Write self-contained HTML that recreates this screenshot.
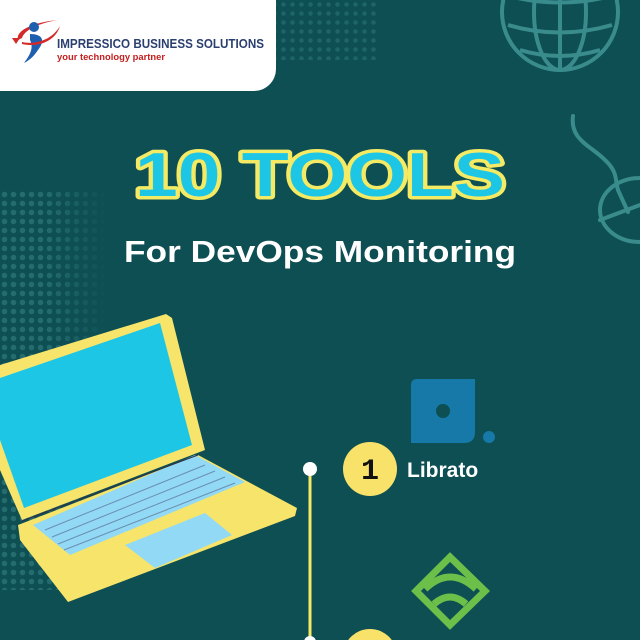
<!DOCTYPE html>
<html><head><meta charset="utf-8"><style>
html,body{margin:0;padding:0;width:640px;height:640px;overflow:hidden}
body{background:#0d4f52;position:relative;font-family:"Liberation Sans",sans-serif}
.dots{position:absolute;left:0;top:190px;width:110px;height:400px;background-image:radial-gradient(circle,#2b7477 2.5px,transparent 3px);background-size:9px 9px;opacity:.8;-webkit-mask-image:linear-gradient(to right,#000 40%,transparent);mask-image:linear-gradient(to right,#000 40%,transparent)}
.dots2{position:absolute;left:270px;top:0;width:110px;height:60px;background-image:radial-gradient(circle,#2b7477 2px,transparent 2.5px);background-size:9px 9px;opacity:.6}
</style></head><body>
<div class="dots"></div><div class="dots2"></div>
<div style="position:absolute;left:0;top:0;width:276px;height:91px;background:#fff;border-bottom-right-radius:22px"></div>
<svg width="640" height="640" style="position:absolute;left:0;top:0;overflow:hidden">
<path d="M18 40 C15 30,35 22,58 20 C45 22,25 28,22 38 Z" fill="#d32a2a"/>
<path d="M16 44 l-4 -6 8 0z" fill="#d32a2a"/>
<circle cx="34" cy="27" r="5" fill="#1f5fb0"/>
<path d="M30 34 C42 34,46 40,38 50 C34 56,30 60,24 63 C30 55,34 48,30 40Z" fill="#1f5fb0"/>
<path d="M22 42 C35 45,52 40,60 26 C56 40,40 48,22 44Z" fill="#d32a2a"/>
<text x="57" y="48" font-size="12.6" font-weight="bold" fill="#2a3f6f" textLength="207" lengthAdjust="spacingAndGlyphs">IMPRESSICO BUSINESS SOLUTIONS</text>
<text x="57" y="60" font-size="9.5" font-weight="bold" fill="#c41e1e" textLength="108" lengthAdjust="spacingAndGlyphs">your technology partner</text>
<g fill="none" stroke="#3a8c8c" stroke-width="4">
<circle cx="560" cy="12" r="58"/>
<ellipse cx="560" cy="12" rx="26" ry="58"/>
<line x1="560" y1="-46" x2="560" y2="70"/>
<path d="M505 -5 Q560 10 615 -5 M508 25 Q560 40 612 25 M520 50 Q560 62 600 50"/>
</g>
<g fill="none" stroke="#3a8c8c" stroke-width="4" stroke-linecap="round">
<path d="M573 116 C570 140,590 145,605 160 C618 172,615 180,618 190"/>
<ellipse cx="640" cy="210" rx="40" ry="32"/>
<path d="M600 220 L640 205 M618 190 L628 212"/>
</g>
<text x="135" y="196" font-size="62" font-weight="bold" fill="#1ec6e6" stroke="#f5ea63" stroke-width="7" paint-order="stroke" stroke-linejoin="round" textLength="370" lengthAdjust="spacingAndGlyphs">10 TOOLS</text>
<text x="124" y="262" font-size="31" font-weight="bold" fill="#fff" textLength="392" lengthAdjust="spacingAndGlyphs">For DevOps Monitoring</text>
<polygon points="0,365 166,314 172,318 205,450 22,520 0,470" fill="#f7e46a"/>
<polygon points="0,378 160,323 192,445 24,508 0,440" fill="#1ec6e6"/>
<polygon points="18,525 198,455 297,508 295,516 68,602 20,540" fill="#f7e46a"/>
<polygon points="33,525 195,455 245,482 70,555" fill="#92d9f5"/>
<polygon points="125,545 205,513 232,535 155,568" fill="#92d9f5"/>
<g stroke="#6a8fb0" stroke-width="1">
<line x1="45" y1="530" x2="205" y2="465"/><line x1="52" y1="537" x2="215" y2="471"/><line x1="58" y1="544" x2="225" y2="477"/><line x1="64" y1="550" x2="235" y2="483"/>
</g>
<line x1="22" y1="521" x2="198" y2="455" stroke="#334" stroke-width="1"/>
<line x1="310" y1="468" x2="310" y2="640" stroke="#f5ea63" stroke-width="3"/>
<circle cx="310" cy="469" r="7" fill="#fff"/>
<circle cx="310" cy="642" r="6" fill="#fff"/>
<circle cx="370" cy="469" r="27" fill="#f9e26a"/>
<circle cx="370" cy="656" r="27" fill="#f9e26a"/>
<text x="370" y="479" font-family="Liberation Mono" font-size="30" font-weight="bold" text-anchor="middle" fill="#111">1</text>
<text x="407" y="477" font-size="21" font-weight="bold" fill="#fff">Librato</text>
<path d="M417 379 H475 V432 Q475 443 464 443 H411 V385 Q411 379 417 379Z" fill="#1679a8"/>
<circle cx="443" cy="411" r="7" fill="#0d4f52"/>
<circle cx="489" cy="437" r="6" fill="#1679a8"/>
<g fill="none" stroke="#6cc04a" stroke-width="7" stroke-linejoin="miter">
<polygon points="450,557 485,591 450,625 416,591"/>
<path d="M425 589 Q450 565 476 589 M434 604 Q450 590 466 604"/>
</g>
</svg>
</body></html>
